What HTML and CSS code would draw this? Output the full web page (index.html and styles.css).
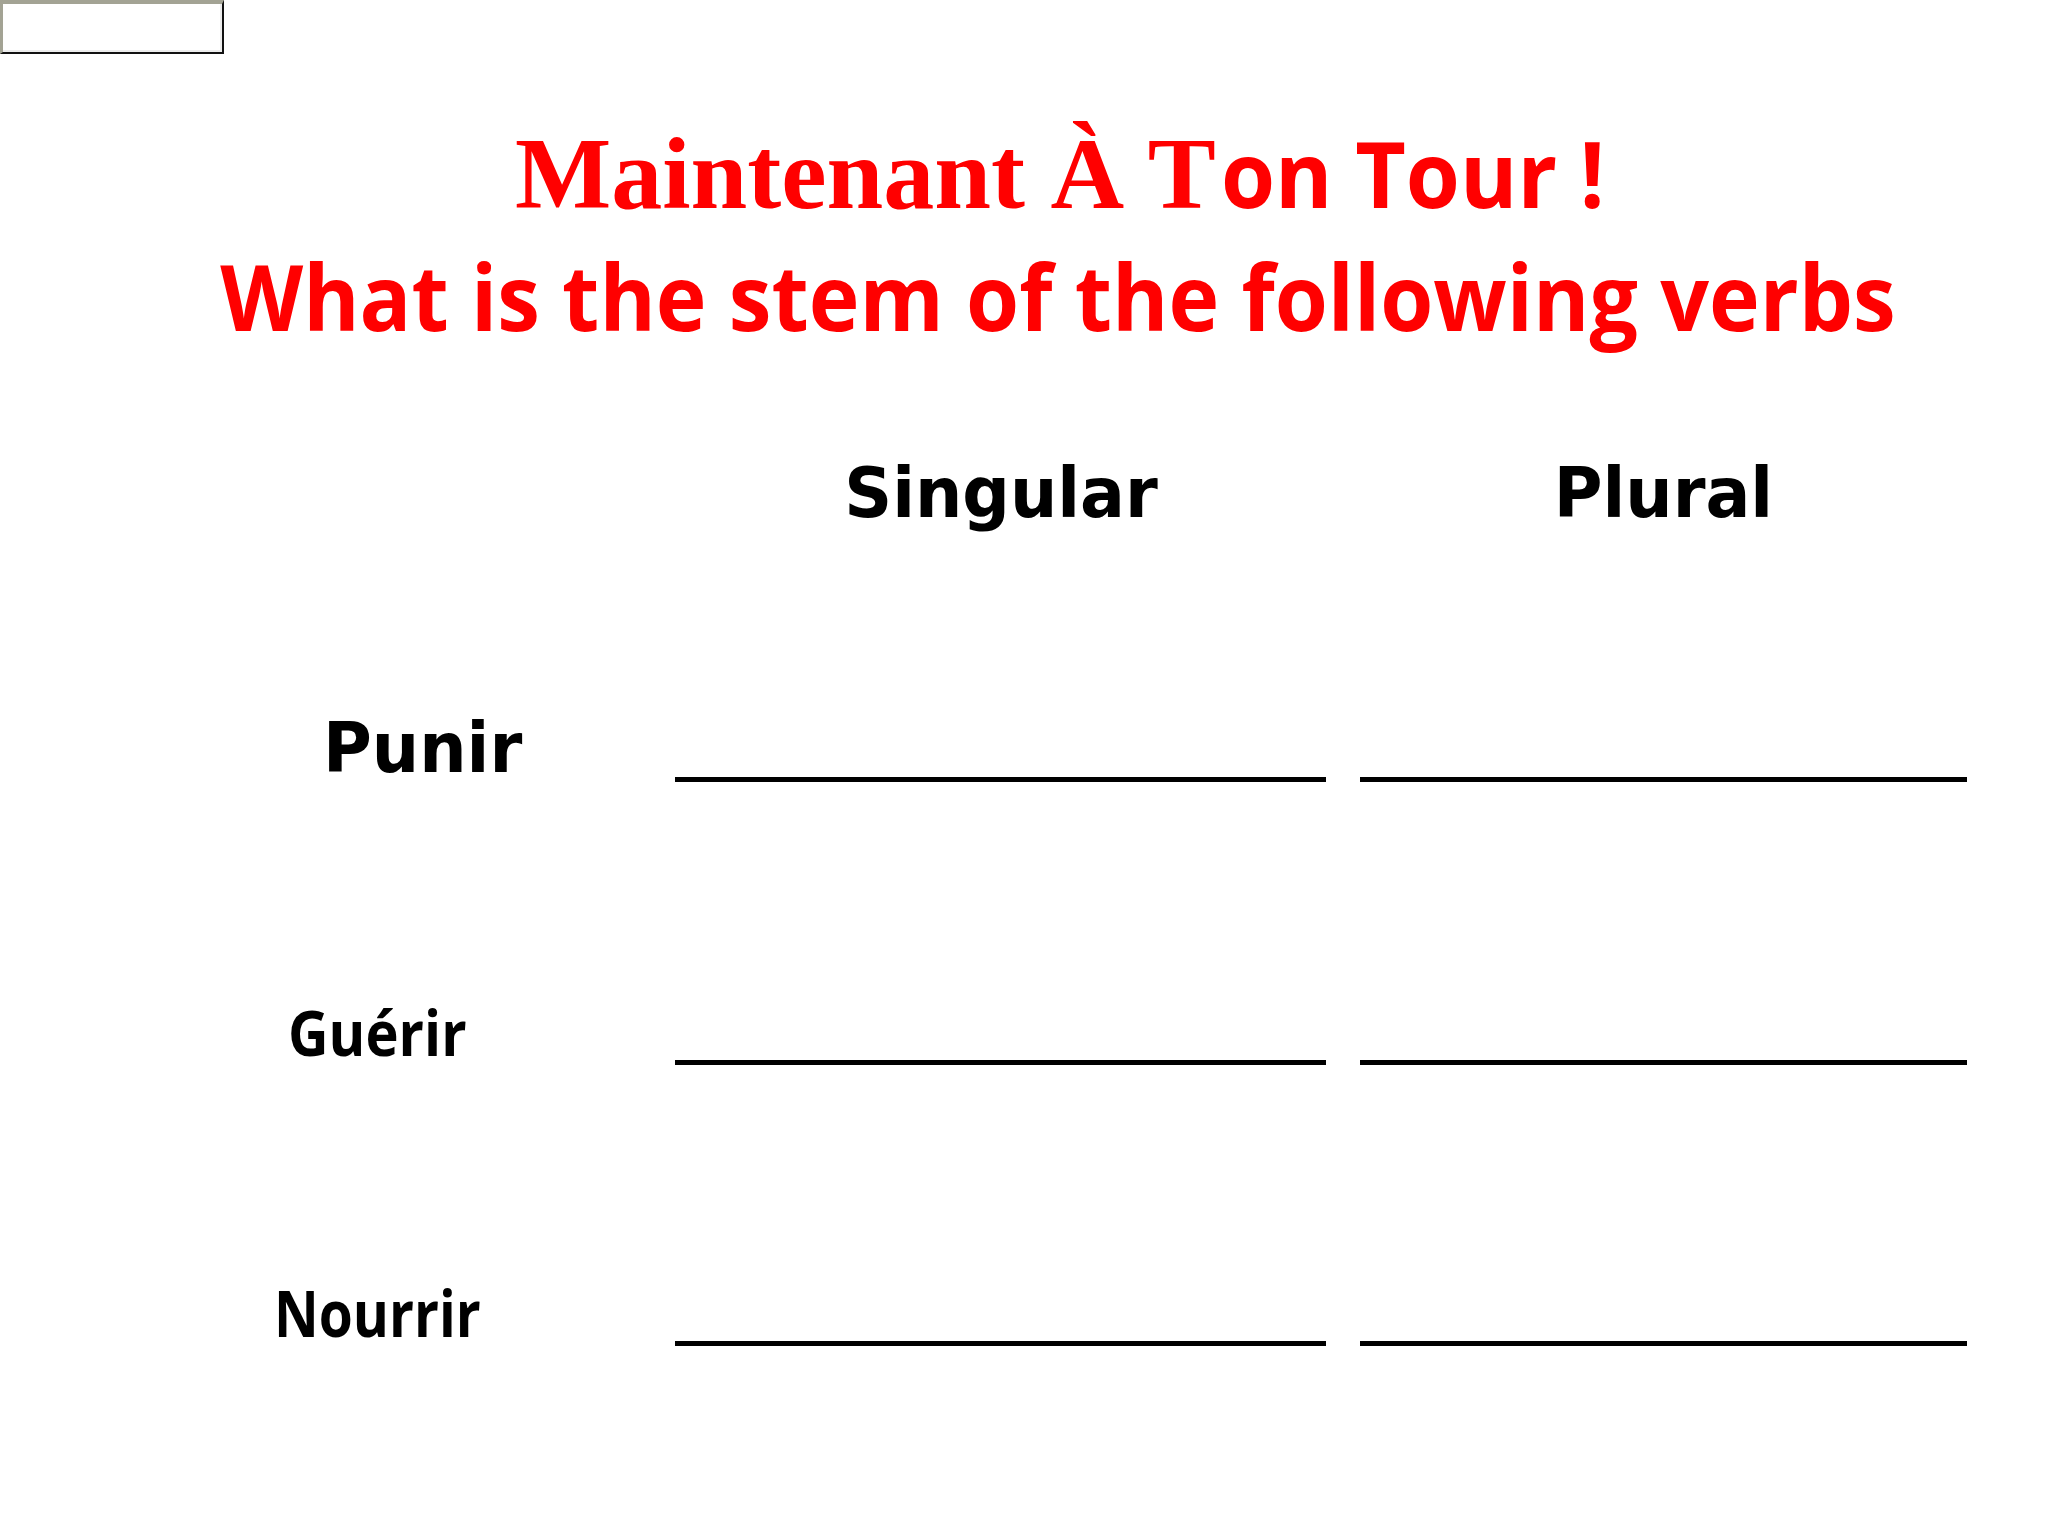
FILE: index.html
```html
<!DOCTYPE html>
<html lang="fr">
<head>
<meta charset="utf-8">
<title>Maintenant À Ton Tour !</title>
<link rel="stylesheet" href="styles.css">
</head>
<body>
<div class="corner-box"></div>
<main class="slide">
  <h1 class="title1">
    <span class="t1-wrap t1-serif-box"><span class="t1-serif">Maintenant À T</span></span><span class="t1-wrap t1-sans-box"><span class="t1-sans">on Tour !</span></span>
  </h1>
  <h2 class="title2"><span class="t2-inner">What is the stem of the following verbs</span></h2>
  <div class="table">
    <div class="cell"></div>
    <div class="cell head"><span class="head-text">Singular</span></div>
    <div class="cell head"><span class="head-text">Plural</span></div>

    <div class="cell label label-punir"><span class="punir">Punir</span></div>
    <div class="cell blank"></div>
    <div class="cell blank"></div>

    <div class="cell label label-guerir"><span class="guerir">Guérir</span></div>
    <div class="cell blank"></div>
    <div class="cell blank"></div>

    <div class="cell label label-nourrir"><span class="nourrir">Nourrir</span></div>
    <div class="cell blank"></div>
    <div class="cell blank"></div>
  </div>
</main>
</body>
</html>
```

FILE: styles.css
```css
html, body {
  margin: 0;
  padding: 0;
  background: #ffffff;
}
body {
  width: 2048px;
  height: 1536px;
  overflow: hidden;
  font-family: "DejaVu Sans", sans-serif;
  color: #000;
}
.corner-box {
  box-sizing: border-box;
  width: 224px;
  height: 54px;
  background: #fff;
  border-top: 4px solid #a3a394;
  border-left: 3px solid #a3a394;
  border-right: 2px solid #111;
  border-bottom: 2px solid #111;
  box-shadow: inset -2px -2px 0 #ececec;
}
.slide {
  padding-left: 68px;
}
.title1 {
  margin: 64px 0 0 0;
  text-align: center;
  color: #ff0000;
  font-family: "Liberation Serif", serif;
  font-size: 102px;
  line-height: 110px;
  font-weight: bold;
  white-space: nowrap;
}
.t1-wrap {
  display: inline-block;
  text-align: left;
  vertical-align: baseline;
}
.t1-serif-box { width: 706px; }
.t1-sans-box { width: 380px; }
.t1-serif {
  display: inline-block;
}
.t1-sans {
  display: inline-block;
  font-family: "Open Sans", sans-serif;
  font-weight: 700;
  font-size: 92px;
  transform: scaleX(0.95);
  transform-origin: left center;
}
.title2 {
  margin: 17px 0 0 0;
  text-align: center;
  color: #ff0000;
  font-family: "Open Sans", sans-serif;
  font-weight: 700;
  font-size: 92px;
  line-height: 100px;
  white-space: nowrap;
}
.t2-inner {
  display: inline-block;
  transform: scaleX(0.933);
  transform-origin: center;
}
.table {
  margin-left: -68px;
  margin-top: 112px;
  display: grid;
  grid-template-columns: 641px 651px 607px;
  column-gap: 34px;
  grid-template-rows: 70px 254px 283px 281px;
  align-items: end;
}
.head {
  text-align: center;
  font-family: "DejaVu Sans", sans-serif;
  font-weight: bold;
  font-size: 70px;
  line-height: 70px;
  white-space: nowrap;
}
.head-text {
  display: inline-block;
  transform: scaleX(0.95);
}
.blank {
  height: 0;
  border-bottom: 5px solid #000;
}
.label {
  white-space: nowrap;
}
.label span {
  display: inline-block;
  transform-origin: left bottom;
}
.label-punir { padding-left: 323px; }
.label-guerir { padding-left: 288px; }
.label-nourrir { padding-left: 274px; }
.punir {
  font-family: "DejaVu Sans", sans-serif;
  font-weight: bold;
  font-size: 69px;
  line-height: 68px;
  transform: scaleX(0.965);
}
.guerir {
  font-family: "Open Sans", sans-serif;
  font-weight: 700;
  font-size: 63px;
  line-height: 67px;
  transform: scaleX(0.89);
}
.nourrir {
  font-family: "Open Sans", sans-serif;
  font-weight: 700;
  font-size: 64px;
  line-height: 66px;
  transform: scaleX(0.86);
}
```
